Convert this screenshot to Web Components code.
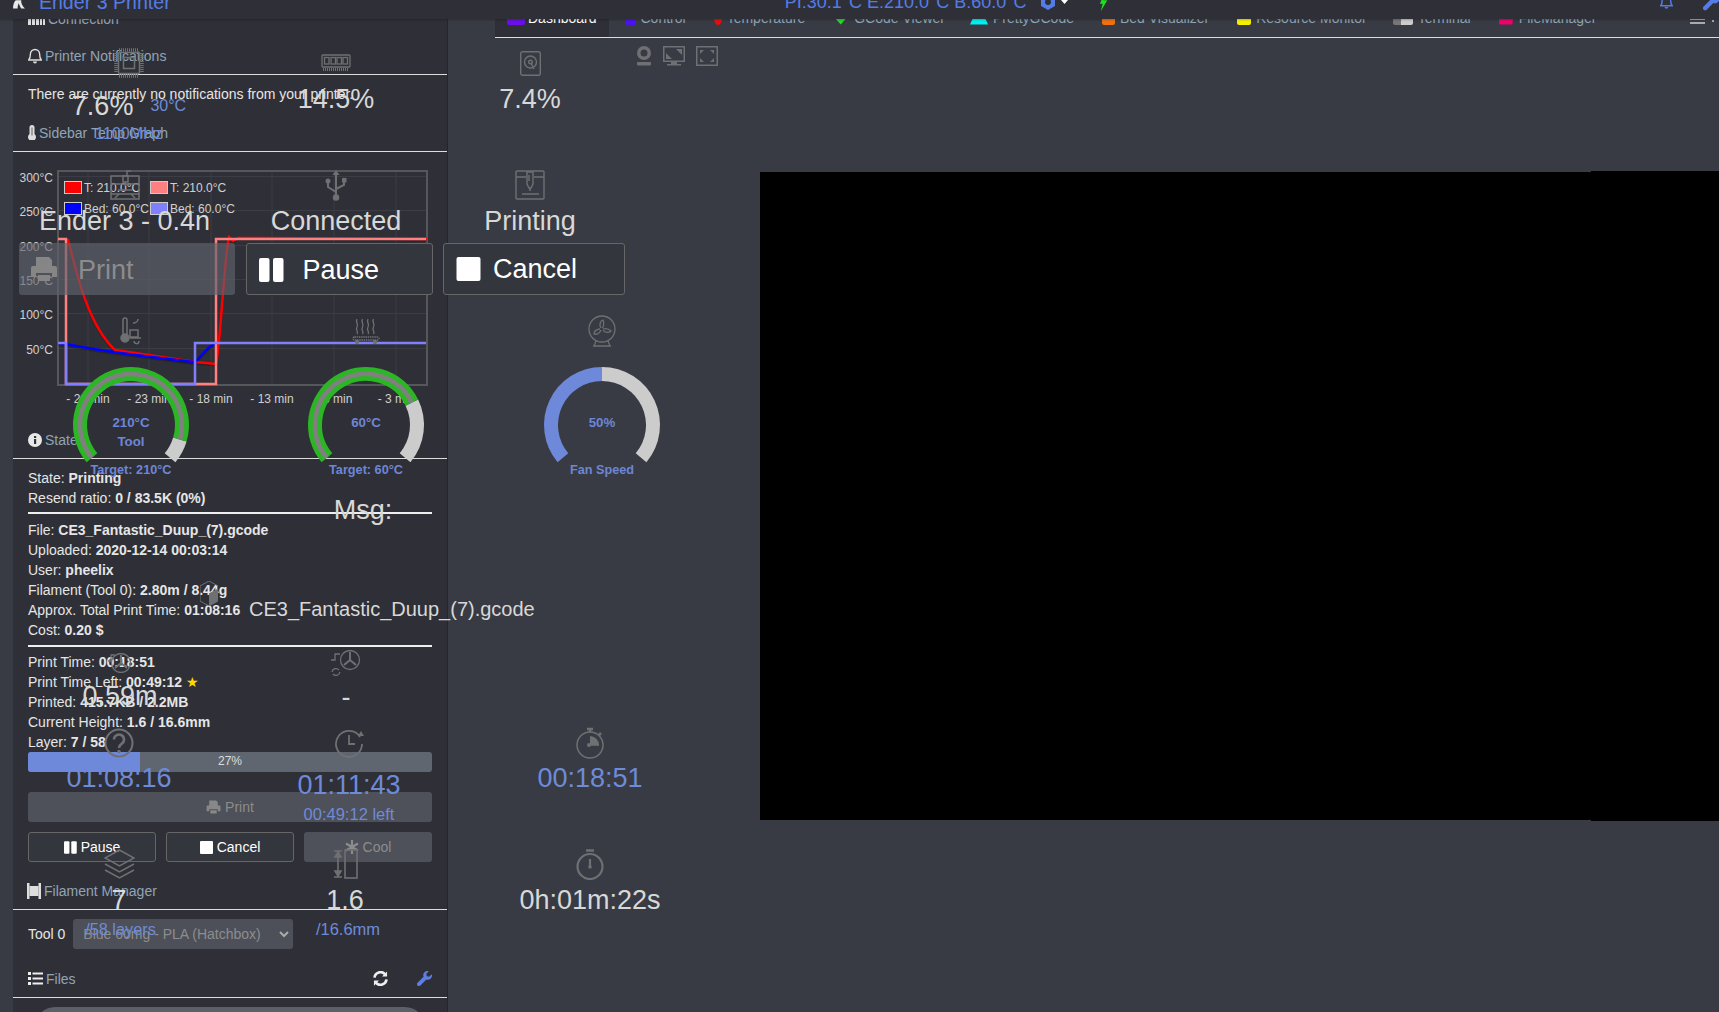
<!DOCTYPE html>
<html><head><meta charset="utf-8"><title>Ender 3 Printer</title>
<style>
html,body{margin:0;height:1012px;overflow:hidden;background:#383b43;font:14px/20px "Liberation Sans",Arial,sans-serif;color:#e6e6e6}
#app{position:relative;width:1719px;height:1012px;overflow:hidden;display:flex;align-items:flex-start}
</style></head><body>
<div id="app">
<op-navbar></op-navbar>
<op-sidebar>
  <op-section title="Connection" kind="first" icon="signal"></op-section>
  <op-section title="Printer Notifications" icon="bell">
    <op-pad>There are currently no notifications from your printer.</op-pad>
  </op-section>
  <op-section title="Sidebar Temp Graph" icon="thermo"><op-chart></op-chart></op-section>
  <op-section title="State" icon="info"><op-state></op-state></op-section>
  <op-section title="Filament Manager" icon="spool"><op-filament></op-filament></op-section>
  <op-section title="Files" icon="list" actions="1"><op-filebar></op-filebar></op-section>
</op-sidebar>
<op-main></op-main>
<op-dashboard></op-dashboard>
</div>
<script>
const G='#6f7073';
const ic={
signal:`<svg viewBox="0 0 17 24" width="17" height="24"><path d="M0 17h3v7H0zM4 14h3v10H4zM8 11h3v13H8zM12 8h2v16h-2zM15 6h2v18h-2z" fill="#ddd"/></svg>`,
bell:`<svg viewBox="0 0 14 16" width="14" height="16"><path d="M7 1.500a4.600 4.600 0 0 1 4.600 4.600c0 4 .9 5 1.700 5.900H.7c.8-.9 1.700-1.900 1.700-5.900A4.600 4.600 0 0 1 7 1.500z" fill="none" stroke="#ddd" stroke-width="1.400"/><path d="M5 13.500h4a2 2 0 0 1-4 0z" fill="#ddd"/></svg>`,
thermo:`<svg viewBox="0 0 8 15" width="8" height="15"><path d="M1.500 2.500a2.500 2.500 0 0 1 5 0v6.500a4 4 0 1 1-5 0z" fill="#ddd"/><path d="M4 2.500v8" stroke="#777" stroke-width="1.200"/></svg>`,
info:`<svg viewBox="0 0 14 14" width="14" height="14"><circle cx="7" cy="7" r="7" fill="#e8e8e8"/><rect x="6" y="6" width="2.200" height="5" fill="#333"/><rect x="6" y="3" width="2.200" height="2" fill="#333"/></svg>`,
spool:`<svg viewBox="0 0 14 16" width="14" height="16" style="margin-left:-1px"><path d="M0 0h2.500v16H0zM11.500 0H14v16h-2.500z" fill="#ddd"/><rect x="2.500" y="3" width="9" height="10" fill="#ddd"/></svg>`,
list:`<svg viewBox="0 0 15 13" width="15" height="13" fill="#eee"><path d="M0 0h3v3H0zM4.500 .5H15v2H4.500zM0 5h3v3H0zM4.500 5.500H15v2H4.500zM0 10h3v3H0zM4.500 10.500H15v2H4.500z"/></svg>`,
refresh:`<svg viewBox="0 0 16 16" width="15" height="15" fill="none" stroke="#eee" stroke-width="2.800"><path d="M1.600 7A6.500 6.500 0 0 1 13 3.500"/><path d="M14.400 9A6.500 6.500 0 0 1 3 12.500"/><path d="M15 .4v5.400H9.600zM1 15.600v-5.400h5.400z" fill="#eee" stroke="none"/></svg>`,
wrench:`<svg viewBox="0 0 16 16" width="15" height="15"><path d="M15.700 3.400l-2.700 2.700-2.500-.6-.6-2.500L12.600.3A4.400 4.400 0 0 0 7 6L.6 12.400a2 2 0 0 0 3 3L10 9a4.400 4.400 0 0 0 5.700-5.600z" fill="#5f7fe0"/></svg>`,
printerFill:c=>`<svg viewBox="0 0 28 26" width="100%" height="100%"><path d="M6 1h13l3 3v6H6zM1 12a2 2 0 0 1 2-2h22a2 2 0 0 1 2 2v9h-5v-4H6v4H1zM8 19h12v6H8z" fill="${c}"/><path d="M9 4h9v5H9z" fill="${c}" opacity=".6"/></svg>`,
pause:`<svg viewBox="0 0 25 24" width="100%" height="100%" fill="#fff"><rect x="0" y="0" width="10.500" height="24" rx="2"/><rect x="14" y="0" width="10.500" height="24" rx="2"/></svg>`,
stop:`<svg viewBox="0 0 24 24" width="100%" height="100%"><rect width="24" height="24" rx="2" fill="#fff"/></svg>`,
snow:`<svg viewBox="0 0 14 14" width="14" height="14" stroke="#8c8c8c" stroke-width="2.200" fill="none"><path d="M7 0v14M1 3.500l12 7M13 3.500l-12 7"/></svg>`,
cpu:`<svg viewBox="0 0 30 30" width="30" height="30" fill="none" stroke="${G}"><rect x="4.500" y="4.500" width="21" height="21" rx="1" stroke-width="1.500"/><rect x="9.500" y="9.500" width="11" height="11" stroke-width="1.500"/><path d="M5 2h20M5 28h20M2 5v20M28 5v20" stroke-width="3.500" stroke-dasharray="1 1"/></svg>`,
ram:`<svg viewBox="0 0 30 18" width="30" height="18" fill="none" stroke="${G}" stroke-width="1.300"><rect x="1" y="1" width="28" height="12" rx="1"/><rect x="3.500" y="3.500" width="4.500" height="6.500"/><rect x="10" y="3.500" width="4.500" height="6.500"/><rect x="16" y="3.500" width="4.500" height="6.500"/><rect x="22" y="3.500" width="4.500" height="6.500"/><path d="M2 15.500h26" stroke-width="3" stroke-dasharray="1 1"/></svg>`,
disk:`<svg viewBox="0 0 21 25" width="21" height="25" fill="none" stroke="${G}" stroke-width="1.400"><rect x=".7" y=".7" width="19.600" height="23.600" rx="2"/><circle cx="10.500" cy="11" r="6"/><circle cx="10.500" cy="11" r="1.800"/><path d="M11 12l3 6"/></svg>`,
ender:`<svg viewBox="0 0 30 30" width="30" height="30" fill="none" stroke="${G}" stroke-width="1.500"><path d="M1 6h28v23H1zM1 14h28M1 24h28"/><path d="M9 24l-4 4M21 24l4 4"/><path d="M17 6V1h4M13 6h5v6h-5zM15.500 12v4"/><path d="M8 20h14"/></svg>`,
usb:`<svg viewBox="0 0 24 31" width="24" height="31" fill="none" stroke="${G}" stroke-width="2"><path d="M12 1v25"/><path d="M12 0l3.500 5h-7z" fill="${G}" stroke="none"/><circle cx="12" cy="27.500" r="3.200" fill="${G}" stroke="none"/><path d="M12 22L4 17v-4M12 19l8-4v-3"/><circle cx="4" cy="11" r="2.500" fill="${G}" stroke="none"/><rect x="18" y="8" width="4.500" height="4.500" fill="${G}" stroke="none"/></svg>`,
status:`<svg viewBox="0 0 30 30" width="30" height="30" fill="none" stroke="${G}" stroke-width="1.400"><rect x="1" y="1" width="28" height="28" rx="1"/><path d="M1 7h10M19 7h10"/><path d="M12 2h6v12l-2 4h-2l-2-4zM14 5v6"/><path d="M15 18v3M7 24h17" stroke-width="1.600"/></svg>`,
tool:`<svg viewBox="0 0 22 29" width="22" height="29" fill="none" stroke="${G}" stroke-width="1.500"><path d="M3 3a2 2 0 0 1 4 0v14"/><path d="M3 3v14"/><circle cx="5" cy="21" r="4" fill="${G}"/><path d="M10 13h8v7h-8zM10 21h11M13 6c2 0 5-1 5-4M14 24c0 3 5 4 5 0"/></svg>`,
bed:`<svg viewBox="0 0 28 26" width="28" height="26" fill="none" stroke="${G}" stroke-width="1.300"><path d="M5 1c-2 3 2 5 0 8s2 5 0 7M10.500 1c-2 3 2 5 0 8s2 5 0 7M16 1c-2 3 2 5 0 8s2 5 0 7M21.500 1c-2 3 2 5 0 8s2 5 0 7"/><rect x="1" y="19" width="26" height="3" rx="1.500" stroke-dasharray="1.500 .7"/><circle cx="5" cy="24" r="1.500" fill="${G}"/><circle cx="23" cy="24" r="1.500" fill="${G}"/></svg>`,
fan:`<svg viewBox="0 0 28 32" width="28" height="32" fill="none" stroke="${G}" stroke-width="1.300"><circle cx="14" cy="14" r="13"/><path d="M13 13c-2-3-1-7 2-8 1 2 1 6-.5 8M15 14c3-1 6 0 8 2-2 2-6 2-8-1M13 15c-1 3-4 5-7 4 0-3 3-5 6-5"/><path d="M8 26l-2 5h16l-2-5M5 31h18"/></svg>`,
cube:`<svg viewBox="0 0 18 25" width="18" height="25"><path d="M9 0l9 5v15l-9 5-9-5V5z" fill="none" stroke="${G}" stroke-width="1"/><path d="M9 12.500l9-5V20l-9 5z" fill="${G}"/></svg>`,
fangraph:`<svg viewBox="0 0 30 26" width="30" height="26" fill="none" stroke="${G}" stroke-width="1.300"><circle cx="19" cy="10" r="9.500"/><path d="M19 10V2M19 10l-6 5M19 10l6 5" stroke-width="2"/><path d="M0 10h4V4h5M1 22a4 4 0 0 1 7-2M9 22a4 4 0 0 1-7 2"/></svg>`,
fil:`<svg viewBox="0 0 24 20" width="24" height="20" fill="none" stroke="${G}" stroke-width="1.300"><circle cx="13" cy="10" r="9.500"/><path d="M13 10V2M13 10l-6 5M13 10l6 5" stroke-width="2"/><path d="M0 8h3V2h4"/></svg>`,
question:`<svg viewBox="0 0 30 30" width="30" height="30" fill="none" stroke="${G}" stroke-width="2"><circle cx="15" cy="15" r="13.500"/><path d="M10 11.500a5 5 0 1 1 8 4c-2 1.500-3 2-3 4.500" stroke-width="2.600"/><circle cx="15" cy="23.500" r="1.700" fill="${G}" stroke="none"/></svg>`,
history:`<svg viewBox="0 0 31 30" width="31" height="30" fill="none" stroke="${G}" stroke-width="1.800"><path d="M26 9A13 13 0 1 0 28 16"/><path d="M24 8h6l-3-5z" fill="${G}" stroke="none"/><path d="M15 7v9h6"/></svg>`,
chrono:`<svg viewBox="0 0 28 32" width="28" height="32" fill="none" stroke="${G}" stroke-width="1.500"><circle cx="14" cy="18" r="13"/><path d="M11 2h6M14 2v3M25 6l-2 2" stroke-width="2.500"/><path d="M14 18V9a9 9 0 0 1 9 9z" fill="${G}" stroke="none"/><path d="M14 18h9"/><circle cx="13" cy="18" r="2" fill="${G}" stroke="none"/></svg>`,
watch:`<svg viewBox="0 0 28 31" width="28" height="31" fill="none" stroke="${G}" stroke-width="2.200"><circle cx="14" cy="17.500" r="12.500"/><path d="M10 1.500h8" stroke-width="2.500"/><path d="M14 10v8"/><circle cx="14" cy="18" r="1.800" fill="${G}" stroke="none"/></svg>`,
layers:`<svg viewBox="0 0 31 30" width="31" height="30" fill="none" stroke="${G}" stroke-width="1.500"><path d="M15.500 1L30 9 15.500 17 1 9zM1 15l14.500 8L30 15M1 21l14.500 8L30 21"/></svg>`,
height:`<svg viewBox="0 0 25 30" width="25" height="30" fill="none" stroke="${G}" stroke-width="1.600"><rect x="12" y="1" width="12" height="28"/><path d="M5 2v26M1 2h8M1 28h8"/><path d="M5 3l3 5H2zM5 27l3-5H2z" fill="${G}"/></svg>`,
cam:`<svg viewBox="0 0 16 20" width="16" height="20" fill="${G}"><path d="M8 0a7 7 0 1 1 0 14A7 7 0 0 1 8 0zm0 3.500a3.500 3.500 0 1 0 0 7 3.500 3.500 0 0 0 0-7z"/><rect x="1" y="16" width="14" height="3.500" rx="1"/></svg>`,
mon:`<svg viewBox="0 0 22 20" width="22" height="20" fill="${G}"><path d="M0 0h22v16H0zm1.500 1.500v13h19v-13z" fill-rule="evenodd"/><path d="M13 3h6v6zM9 13H3V7zM8 16h6v2h4v1.500H4V18h4z"/></svg>`,
full:`<svg viewBox="0 0 22 20" width="22" height="20" fill="${G}"><path d="M0 0h22v20H0zm1.500 1.500v17h19v-17z" fill-rule="evenodd"/><path d="M4 4h4L4 8zM18 4v4l-4-4zM4 16v-4l4 4zM18 16h-4l4-4z"/></svg>`
};
function def(name,html,extra){customElements.define(name,class extends HTMLElement{
  connectedCallback(){if(this.shadowRoot)return;const s=this.attachShadow({mode:'open'});s.innerHTML=typeof html==='function'?html(this):html;extra&&extra(this,s)}
})}

def('op-navbar',`<style>
:host{position:absolute;left:0;top:0;width:1719px;height:19px;background:#2f3037;z-index:5;overflow:hidden;box-shadow:0 1px 2px rgba(0,0,0,.25)}
.r{display:flex;align-items:center;height:20px;margin-top:-8px;font-size:19.600px;line-height:20px;color:#557ce6;white-space:nowrap}
.logo{margin-left:13px;width:13px;height:20px;margin-right:14px}
.c{margin-left:614px;font-size:18px}
.h{margin-left:15px;display:flex;align-items:center}
.b{margin-left:31px}.bell{margin-left:552px}.w{margin-left:30px}
</style><div class="r">
<svg class="logo" viewBox="0 0 13 20"><path d="M0 17C0 13 1 10 3 8H9C8.500 11 10 14 13 17H9C7.500 15 6.500 13 6.500 11.500 5.500 13 5 15 5 17Z" fill="#e8e8e8"/></svg>
<span>Ender 3 Printer</span>
<span class="c">PI:30.1°C E:210.0°C B:60.0°C</span>
<span class="h"><svg width="14" height="16" viewBox="0 0 14 16"><path d="M7 0l7 4v8l-7 4-7-4V4z" fill="#557ce6"/><circle cx="7" cy="8" r="3" fill="#2f3037"/></svg><svg width="7" height="4" viewBox="0 0 9 5" style="margin-left:6px"><path d="M0 0h9L4.500 5z" fill="#fff"/></svg></span>
<svg class="b" width="9" height="20" viewBox="0 0 9 20"><path d="M6 0L1 12h3L2 20l7-12H5l2-8z" fill="#1fe01f"/></svg>
<svg class="bell" width="14" height="16" viewBox="0 0 14 16"><path d="M7 1.500a4.600 4.600 0 0 1 4.600 4.600c0 4 .9 5 1.700 5.900H.7c.8-.9 1.700-1.900 1.700-5.900A4.600 4.600 0 0 1 7 1.500z" fill="none" stroke="#557ce6" stroke-width="1.600"/><path d="M5 13.500h4a2 2 0 0 1-4 0z" fill="#557ce6"/></svg>
<svg class="w" width="18" height="18" viewBox="0 0 16 16"><path d="M15.700 3.400l-2.700 2.700-2.500-.6-.6-2.500L12.600.3A4.400 4.400 0 0 0 7 6L.6 12.400a2 2 0 0 0 3 3L10 9a4.400 4.400 0 0 0 5.700-5.600z" fill="#557ce6"/></svg>
</div>`);

def('op-sidebar',`<style>
:host{display:block;flex:none;width:434px;margin:0 0 0 13px;height:1012px;background:#2f3037;border-right:1px solid #25262b;overflow:hidden}
</style><slot></slot>`);

def('op-section',h=>{
 const first=h.getAttribute('kind')==='first';
 return `<style>
:host{display:block}
.h{display:flex;align-items:center;height:37px;padding:0 15px;border-bottom:${first?'0':'1px solid #ddd'};color:#8fa5b6;gap:3px;white-space:nowrap}
.i{display:flex;align-items:center;${first?'align-self:flex-start;height:25px;align-items:flex-end;overflow:hidden':''}}
.a{margin-left:auto;display:flex;gap:29px}
</style><div class="h"><span class="i">${ic[h.getAttribute('icon')]}</span><span>${h.getAttribute('title')}</span>${h.hasAttribute('actions')?`<span class="a">${ic.refresh}${ic.wrench}</span>`:''}</div><slot></slot>`});

def('op-pad',`<style>:host{display:block;padding:9px 15px 10px;white-space:nowrap}</style><slot></slot>`);

def('op-chart',()=>{
 const yl=[['300',177],['250',211],['200',246],['150',280],['100',314],['50',349]];
 const xl=[['- 28 min',88],['- 23 min',149],['- 18 min',211],['- 13 min',272],['- 8 min',334],['- 3 min',396]];
 const t=(x,y,s,a)=>`<text x="${x}" y="${y}" text-anchor="${a}">${s}</text>`;
 const lg=(x,y,c,s)=>`<rect x="${x+.5}" y="${y+.5}" width="17" height="12" fill="${c}" stroke="#ccc"/>`+t(x+20,y+11,s,'start');
 const red='M68 239C76 272 88 325 115 350L195 362 216 364C220 350 224 260 229 237L233 241 238 238 427 239';
 const blue='M58 343L66 344C110 353 160 358 195 362 203 355 208 346 216 343';
 return `<style>:host{display:block;height:269px}svg{display:block;font:12px "Liberation Sans",Arial,sans-serif;fill:#d0d0d0}</style>
<svg width="434" height="269" viewBox="13 152 434 269">
<g stroke="#3c3d44" stroke-width="1">${xl.map(a=>`<path d="M${a[1]} 170V385"/>`).join('')}${yl.map(a=>`<path d="M57 ${a[1]-.5}H427"/>`).join('')}</g>
<rect x="58" y="171" width="369" height="214" fill="none" stroke="#56575b" stroke-width="2"/>
${yl.map(a=>t(53,a[1]+5,a[0]+'°C','end')).join('')}${xl.map(a=>t(a[1],403,a[0],'middle')).join('')}
<g fill="none" stroke="rgba(0,0,0,.2)" stroke-width="2.500" transform="translate(0 1.500)"><path d="${red}"/><path d="${blue}"/></g>
<path d="${red}" fill="none" stroke="#ff0000" stroke-width="2.500"/>
<path d="${blue}" fill="none" stroke="#0000ff" stroke-width="2.500"/>
<path d="M58 239H66V384H216V239H426" fill="none" stroke="#ff8080" stroke-width="2.500"/>
<path d="M58 343H66V384H195V343H426" fill="none" stroke="#8080ff" stroke-width="2.500"/>
<g>${lg(64,181,'#ff0000','T: 210.0°C')}${lg(150,181,'#ff8080','T: 210.0°C')}${lg(64,202,'#0000ff','Bed: 60.0°C')}${lg(150,202,'#8080ff','Bed: 60.0°C')}</g>
</svg>`});

def('op-btn',h=>{
 const dis=h.hasAttribute('disabled');
 return `<style>:host{display:flex;align-items:center;justify-content:center;box-sizing:border-box;border-radius:3px;border:1px solid ${dis?'transparent':'#666'};background:${dis?'rgba(96,99,109,.65)':'#34363e'};color:${dis?'#8c8c8c':'#fff'};height:100%;min-width:0}
</style><slot></slot>`});

def('op-state',`<style>
:host{display:block;padding:9px 15px 10px}
hr{border:0;border-top:2px solid #eee;margin:4px 0 6px}
hr.l{margin:5px 0 5px}
b{font-weight:700}
.s{color:#ffd700}
.p{height:20px;border-radius:3px;background:#5f6670;position:relative;overflow:hidden;text-align:center;font-size:12px;line-height:19px;color:#ddd}
.p i{position:absolute;left:0;top:0;bottom:0;width:112px;background:#6e88da}.p span{position:relative}
.print{height:30px;margin-top:20px}.g{display:grid;grid-template-columns:repeat(3,1fr);gap:10px;height:30px;margin-top:10px}
.m{display:flex;align-items:center;gap:4px}
</style>
<div>State: <b>Printing</b></div><div>Resend ratio: <b>0 / 83.5K (0%)</b></div><hr>
<div>File: <b>CE3_Fantastic_Duup_(7).gcode</b></div><div>Uploaded: <b>2020-12-14 00:03:14</b></div><div>User: <b>pheelix</b></div>
<div>Filament (Tool 0): <b>2.80m / 8.44g</b></div><div>Approx. Total Print Time: <b>01:08:16</b></div><div>Cost: <b>0.20 $</b></div><hr class="l">
<div>Print Time: <b>00:18:51</b></div><div>Print Time Left: <b>00:49:12</b> <span class="s">★</span></div><div>Printed: <b>415.7KB / 2.2MB</b></div>
<div>Current Height: <b>1.6 / 16.6mm</b></div><div>Layer: <b>7 / 58</b></div>
<div class="p"><i></i><span>27%</span></div>
<op-btn class="print" style="display:flex" disabled><span class="m"><span style="width:15px;height:14px;display:inline-flex">${ic.printerFill('#888')}</span>Print</span></op-btn>
<div class="g">
<op-btn><span class="m"><span style="width:13px;height:13px;display:inline-flex">${ic.pause}</span>Pause</span></op-btn>
<op-btn><span class="m"><span style="width:13px;height:13px;display:inline-flex">${ic.stop}</span>Cancel</span></op-btn>
<op-btn disabled><span class="m">${ic.snow}Cool</span></op-btn>
</div>`);

def('op-filament',`<style>:host{display:flex;align-items:center;gap:8px;padding:9px 15px 11px}
.s{width:220px;height:30px;box-sizing:border-box;background:#4d5059;border-radius:3px;color:#8d8d8d;display:flex;align-items:center;padding:0 4px 0 10px;justify-content:space-between}
</style><span>Tool 0</span><div class="s" role="combobox"><span>Blue 60mg - PLA (Hatchbox)</span><svg width="10" height="7" viewBox="0 0 10 7"><path d="M1 1l4 4 4-4" fill="none" stroke="#aaa" stroke-width="2"/></svg></div>`);

def('op-filebar',`<style>:host{display:block;height:40px;margin:9px 22px 0;background:#5a5f68;border-radius:20px}</style>`);

const tabs=[['Dashboard',18,'#6a0fe8',3,12,''],['Control',11,'#4a14f0',5,12,''],['Temperature',8,'#ee0a0a',5,12,'border-radius:50%'],['GCode Viewer',15,'#1ee01e',6,9,'clip-path:polygon(0 40%,100% 40%,50% 100%)'],['PrettyGCode',18,'#00f0f0',5,12,'clip-path:polygon(35% 0,65% 0,100% 100%,0 100%);border-radius:0'],['Bed Visualizer',13,'#f07010',5,12,''],['Resource Monitor',14,'#f5f000',5,10,''],['Terminal',20,'linear-gradient(90deg,#777 0 40%,#ccc 40%)',5,12,''],['FileManager',15,'#f0006e',5,12,'clip-path:polygon(5% 0,100% 0,92% 100%,0 100%)']];
def('op-main',`<style>
:host{display:block;flex:1;min-width:0;margin-left:1px}
.t{display:flex;gap:4px;margin-left:46px;height:37px;border-bottom:1px solid #ddd;align-items:stretch;position:relative}
.tab{display:flex;align-items:center;padding:0 12px 2px;color:#8fa5b6;white-space:nowrap}
.tab.a{background:#2f3037;color:#fff}
.tab i{display:block;height:14px;border-radius:2px}
.m{position:absolute;right:14px;top:18px;width:15px;height:2px;border-top:2px solid #aaa;border-bottom:2px solid #aaa}
.d{position:absolute;right:5px;top:20px;width:2px;height:2px;background:#aaa}
.cam{display:flex;gap:11px;align-items:flex-start;margin:8px 0 0 187px;height:20px}
.v{margin:106px 0 0 311px;width:959px;height:648px;background:#000;position:relative}
.v::before,.v::after{content:"";position:absolute;left:831px;right:0;height:1px;background:#000}
.v::before{top:-1px}.v::after{bottom:-1px}
</style><div class="t">${tabs.map((a,i)=>`<div class="tab${i==0?' a':''}" style="gap:${a[3]}px;padding-right:${a[4]}px"><i style="width:${a[1]}px;background:${a[2]};${a[5]}"></i><span>${a[0]}</span></div>`).join('')}<div class="m"></div><div class="d"></div></div>
<div class="cam">${ic.cam}${ic.mon}${ic.full}</div><div class="v"></div>`);

function gaugeSvg(h){
 const f=+h.getAttribute('frac'),col=h.getAttribute('color'),st=h.hasAttribute('stripe');
 const cx=70,cy=64,r=51,P=a=>{const t=a*Math.PI/180;return (cx+r*Math.cos(t)).toFixed(2)+' '+(cy+r*Math.sin(t)).toFixed(2)};
 const arc=(a,b)=>`M${P(a)}A${r} ${r} 0 ${b-a>180?1:0} 1 ${P(b)}`;
 const e=140+260*f,B='#6d86d6';
 const lines=(h.getAttribute('lines')||'').split('|');
 const ys=lines.length>1?[62,81]:[62];
 return `<style>:host{display:block;width:140px;height:120px}svg{display:block;font:700 13.300px "Liberation Sans",Arial,sans-serif;fill:${B}}</style>
<svg width="140" height="120"><path d="${arc(e,400)}" fill="none" stroke="#ccc" stroke-width="14"/><path d="${arc(140,e)}" fill="none" stroke="${col}" stroke-width="14"/>${st?`<path d="${arc(140,e)}" fill="none" stroke="#808080" stroke-width="4.500"/>`:''}
${lines.map((s,i)=>`<text x="70" y="${ys[i]+4}" text-anchor="middle">${s}</text>`).join('')}
<text x="70" y="113" text-anchor="middle" font-size="12.700">${h.getAttribute('target')}</text></svg>`}
def('op-gauge',gaugeSvg);

def('op-cell',h=>{
 const iconName=h.getAttribute('icon');
 return `<style>:host{display:flex;flex-direction:column;align-items:center;min-width:0;color:#d8d8d8;font-size:27px;line-height:30px;white-space:nowrap}
.i{height:${h.getAttribute('ih')||30}px;display:flex;align-items:center;justify-content:center;margin-bottom:var(--gap,6px)}
</style>${iconName?`<div class="i">${ic[iconName]}</div>`:''}<slot></slot>`});

def('op-dashboard',`<style>
:host{position:absolute;left:0;top:0;width:734px;z-index:2;display:grid;padding-top:48px;grid-template-rows:122px 75px 70px 180px 86px 69px 78px 121px 120px;font:27px/30px "Liberation Sans",Arial,sans-serif;color:#d8d8d8}
.row{display:grid;align-items:start}
.c3{grid-template-columns:19px 220px 194px 194px}
.b{grid-template-columns:216px 187px 182px;column-gap:10.500px;margin-left:19px;height:52px;margin-top:-2px}
.big{display:flex;align-items:center;gap:19px;width:100%;padding-left:12px;box-sizing:border-box;font-size:27px}
.blue{color:#6e8bd8}.sub{font-size:16px;line-height:20px}
.ic{width:25px;height:24px;flex:none;display:block}
</style>
<div class="row c3"><span></span>
 <op-cell icon="cpu"><span style="display:flex;align-items:center;gap:17px;margin-top:7px"><span>7.6%</span><span class="blue sub">30°C</span></span><span class="blue sub" style="margin-top:3px">1100MHz</span></op-cell>
 <op-cell icon="ram" style="--gap:6px">14.5%</op-cell>
 <op-cell icon="disk">7.4%</op-cell>
</div>
<div class="row" style="grid-template-columns:40px 169px 30px 194px 194px">
 <span></span><op-cell icon="ender" style="overflow:hidden">Ender 3 - 0.4n</op-cell><span></span>
 <op-cell icon="usb">Connected</op-cell>
 <op-cell icon="status">Printing</op-cell>
</div>
<div class="row b">
 <op-btn disabled><span class="big" style="color:#8c8c8c;padding-top:2px;gap:20px"><span class="ic" style="width:28px;height:26px;margin-left:-2px;margin-top:-2px">${ic.printerFill('#868686')}</span>Print</span></op-btn>
 <op-btn><span class="big" style="padding-top:2px"><span class="ic" style="margin-top:-1px">${ic.pause}</span>Pause</span></op-btn>
 <op-btn><span class="big" style="gap:12px"><span class="ic">${ic.stop}</span><span>Cancel</span></span></op-btn>
</div>
<div class="row" style="grid-template-columns:262px 208px 264px">
 <op-cell icon="tool" ih="32" style="--gap:14px"><op-gauge frac=".91" color="#2cb625" stripe lines="210°C|Tool" target="Target: 210°C"></op-gauge></op-cell>
 <op-cell icon="bed" ih="32" style="--gap:14px"><op-gauge frac=".746" color="#2cb625" stripe lines="60°C" target="Target: 60°C"></op-gauge></op-cell>
 <op-cell icon="fan" ih="32" style="--gap:14px"><op-gauge frac=".5" color="#6e88da" lines="50%" target="Fan Speed"></op-gauge></op-cell>
</div>
<div class="row" style="grid-template-columns:726px"><span style="text-align:center">Msg:</span></div>
<div style="display:flex;align-items:flex-start;gap:31px;padding-left:200px"><span style="display:block;height:25px">${ic.cube}</span><span style="font-size:20px;line-height:24px;margin-top:16px;white-space:nowrap">CE3_Fantastic_Duup_(7).gcode</span></div>
<div class="row" style="grid-template-columns:240px 212px">
 <op-cell icon="fil" ih="26" style="--gap:5px">0.59m</op-cell>
 <op-cell icon="fangraph" ih="26" style="--gap:6px">-</op-cell>
</div>
<div class="row" style="grid-template-columns:238px 222px 260px">
 <op-cell icon="question" style="--gap:5px;color:#6e8bd8">01:08:16</op-cell>
 <op-cell icon="history" style="--gap:12px;color:#6e8bd8">01:11:43<span class="sub" style="font-size:16.500px;margin-top:4px">00:49:12 left</span></op-cell>
 <op-cell icon="chrono" style="--gap:5px;color:#6e8bd8">00:18:51</op-cell>
</div>
<div class="row" style="grid-template-columns:238px 214px 276px">
 <op-cell icon="layers" style="--gap:6px">7<span class="blue sub" style="margin-top:4px;margin-left:3px;font-size:16.300px">/58 layers</span></op-cell>
 <op-cell icon="height" style="--gap:6px">1.6<span class="blue sub" style="margin-top:4px;margin-left:6px;font-size:16.500px">/16.6mm</span></op-cell>
 <op-cell icon="watch" style="--gap:6px">0h:01m:22s</op-cell>
</div>`);
</script>
</body></html>
